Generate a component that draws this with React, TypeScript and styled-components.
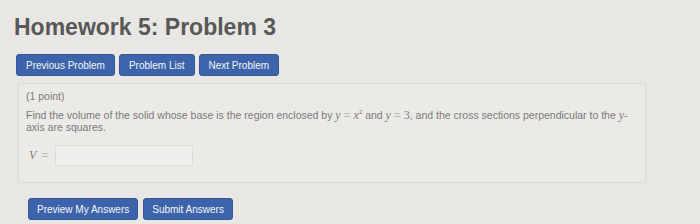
import styled, { createGlobalStyle } from 'styled-components'

const GlobalStyle = createGlobalStyle`
  html, body {
    margin: 0;
    padding: 0;
    background: #e8e7e4;
    font-family: 'Liberation Sans', Arial, sans-serif;
  }
`

const App = () => {
  return (
    <Page>
      <GlobalStyle />
      <Title>Homework 5: Problem 3</Title>
      <NavRow>
        <NavButton $pad={9}>Previous Problem</NavButton>
        <NavButton $pad={9}>Problem List</NavButton>
        <NavButton $pad={9}>Next Problem</NavButton>
      </NavRow>
      <ProblemBox>
        <Points>(1 point)</Points>
        <Statement>
          Find the volume of the solid whose base is the region enclosed by{' '}
          <Math>y</Math> <Eq>=</Eq> <Math>x</Math>
          <sup>2</sup> and <Math>y</Math> <Eq>=</Eq> <Num>3</Num>, and the cross
          sections perpendicular to the <Math>y</Math>-
          <br />
          axis are squares.
        </Statement>
        <AnswerRow>
          <Math>V</Math>
          <Eq>=</Eq>
          <AnswerInput />
        </AnswerRow>
      </ProblemBox>
      <SubmitRow>
        <NavButton $pad={8}>Preview My Answers</NavButton>
        <NavButton $pad={8}>Submit Answers</NavButton>
      </SubmitRow>
    </Page>
  )
}

const Page = styled.div`
  height: 224px;
  padding: 13px 0 0 14px;
  box-sizing: border-box;
  overflow: hidden;
`

const Title = styled.h1`
  margin: 0;
  font-size: 23px;
  font-weight: bold;
  color: #585858;
  line-height: 28px;
`

const NavRow = styled.div`
  display: flex;
  gap: 4px;
  margin: 13px 0 0 2px;
`

const NavButton = styled.button<{ $pad: number }>`
  background: #3d64aa;
  color: #f4f6fb;
  border: 1px solid #34579a;
  border-radius: 3px;
  font-family: 'Liberation Sans', Arial, sans-serif;
  font-size: 10px;
  height: 22px;
  padding: 0 ${(p) => p.$pad}px;
  cursor: pointer;
`

const ProblemBox = styled.div`
  margin: 7px 0 0 4px;
  width: 628px;
  height: 100px;
  box-sizing: border-box;
  border: 1px solid #dcdbd8;
  background: #eceae7;
  padding: 6px 7px;
  color: #7a7a7a;
  font-size: 10.5px;
`

const Points = styled.div`
  line-height: 12px;
`

const Statement = styled.div`
  margin-top: 4px;
  line-height: 12px;

  sup {
    font-size: 6px;
  }
`

const Math = styled.span`
  font-family: 'Liberation Serif', 'Times New Roman', serif;
  font-style: italic;
  font-size: 12px;
`

const Eq = styled.span`
  color: #b9b9b9;
  font-size: 12px;
`

const Num = styled.span`
  font-family: 'Liberation Serif', 'Times New Roman', serif;
  font-size: 12px;
`

const AnswerRow = styled.div`
  display: flex;
  align-items: center;
  gap: 5px;
  margin: 12px 0 0 3px;
`

const AnswerInput = styled.div`
  width: 136px;
  height: 19px;
  margin-left: 2px;
  background: #efeeec;
  border: 1px solid #dedcd9;
  border-radius: 2px;
`

const SubmitRow = styled.div`
  display: flex;
  gap: 5px;
  margin: 15px 0 0 14px;
`

export default App
